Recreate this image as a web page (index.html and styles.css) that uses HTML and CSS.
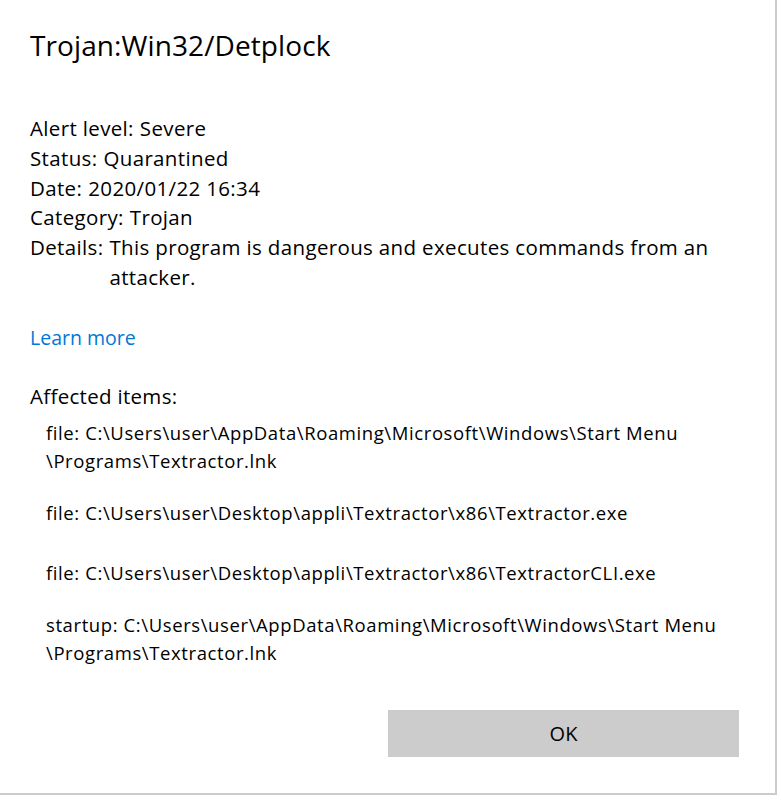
FILE: index.html
```html
<!DOCTYPE html>
<html lang="en">
<head>
<meta charset="utf-8">
<title>Trojan:Win32/Detplock</title>
<link rel="stylesheet" href="styles.css">
</head>
<body>
<div class="dialog">
  <h1 class="title">Trojan:Win32/Detplock</h1>
  <dl class="facts">
    <div class="fact"><dt class="fact-label">Alert level:</dt><dd class="fact-value">Severe</dd></div>
    <div class="fact"><dt class="fact-label">Status:</dt><dd class="fact-value">Quarantined</dd></div>
    <div class="fact"><dt class="fact-label">Date:</dt><dd class="fact-value">2020/01/22 16:34</dd></div>
    <div class="fact"><dt class="fact-label">Category:</dt><dd class="fact-value">Trojan</dd></div>
    <div class="fact"><dt class="fact-label">Details:</dt><dd class="fact-value fact-details">This program is dangerous and executes commands from an attacker.</dd></div>
  </dl>
  <a class="learn" href="#">Learn more</a>
  <h2 class="affected-title">Affected items:</h2>
  <ul class="items">
    <li class="item">file: C:\Users\user\AppData\Roaming\Microsoft\Windows\Start Menu<br>\Programs\Textractor.lnk</li>
    <li class="item item-wide">file: C:\Users\user\Desktop\appli\Textractor\x86\Textractor.exe</li>
    <li class="item">file: C:\Users\user\Desktop\appli\Textractor\x86\TextractorCLI.exe</li>
    <li class="item">startup: C:\Users\user\AppData\Roaming\Microsoft\Windows\Start Menu<br>\Programs\Textractor.lnk</li>
  </ul>
  <div class="actions"><button class="ok" type="button">OK</button></div>
</div>
</body>
</html>
```
FILE: styles.css
```css
html, body {
  margin: 0;
  padding: 0;
  background: #ffffff;
}

body {
  font-family: "Open Sans", "Noto Sans", "Liberation Sans", sans-serif;
  color: #000000;
}

.dialog {
  box-sizing: border-box;
  width: 777px;
  height: 795px;
  border-right: 2px solid #cccccc;
  border-bottom: 2px solid #cccccc;
  display: flex;
  flex-direction: column;
  padding: 0 36px 36px 30px;
}

.title {
  margin: 26px 0 0 0;
  font-size: 28px;
  font-weight: 400;
  line-height: 38px;
  letter-spacing: 0.1px;
}

.facts {
  margin: 50px 0 0 0;
  font-size: 20.5px;
  line-height: 29.8px;
  letter-spacing: 0.35px;
}

.fact {
  display: flex;
  gap: 6px;
}

.fact-label,
.fact-value {
  margin: 0;
}

.fact-details {
  max-width: 620px;
}

.learn {
  margin-top: 31px;
  align-self: flex-start;
  font-size: 19.5px;
  line-height: 28px;
  color: #0078d7;
  text-decoration: none;
}

.affected-title {
  margin: 30px 0 0 0;
  font-size: 20.5px;
  font-weight: 400;
  line-height: 28px;
  letter-spacing: 0.3px;
}

.items {
  list-style: none;
  margin: 9px 0 0 16px;
  padding: 0;
  font-size: 18.5px;
  line-height: 28px;
  letter-spacing: 0.6px;
}

.item {
  margin-bottom: 24px;
}

.item-wide {
  margin-bottom: 32px;
}

.actions {
  margin-top: auto;
  display: flex;
  justify-content: flex-end;
}

.ok {
  width: 351px;
  height: 47px;
  border: none;
  background: #cccccc;
  font-family: inherit;
  font-size: 20px;
  color: #000000;
  padding: 0;
}
```
